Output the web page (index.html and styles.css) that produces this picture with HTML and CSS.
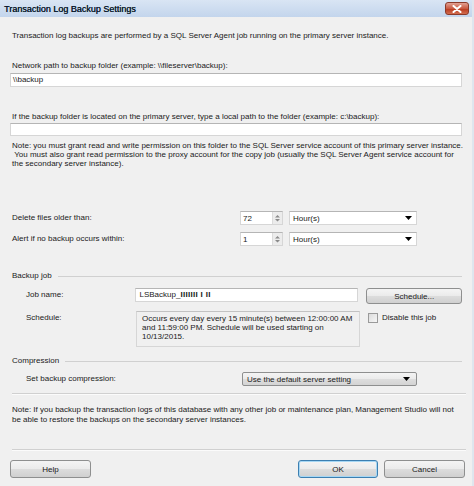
FILE: index.html
```html
<!DOCTYPE html>
<html>
<head>
<meta charset="utf-8">
<link rel="stylesheet" href="styles.css">
</head>
<body>
<div class="window">
  <div class="titlebar">
    <span class="title">Transaction Log Backup Settings</span>
    <span class="close"><svg width="10" height="8" viewBox="0 0 10 8"><path d="M1.5 1 L8.5 7 M8.5 1 L1.5 7" stroke="#fff" stroke-width="2" stroke-linecap="round"/></svg></span>
  </div>
  <div class="content">
    <p class="txt intro">Transaction log backups are performed by a SQL Server Agent job running on the primary server instance.</p>
    <p class="txt lbl1">Network path to backup folder (example: \\fileserver\backup):</p>
    <div class="input in1">\\backup</div>
    <p class="txt lbl2">If the backup folder is located on the primary server, type a local path to the folder (example: c:\backup):</p>
    <div class="input in2"></div>
    <p class="txt note">Note: you must grant read and write permission on this folder to the SQL Server service account of this primary server instance.<br>&nbsp;You must also grant read permission to the proxy account for the copy job (usually the SQL Server Agent service account for<br>the secondary server instance).</p>

    <div class="row row-del">
      <span class="txt rowlbl">Delete files older than:</span>
      <div class="spin"><span class="val">72</span><span class="spinbtn"><svg width="7" height="10" viewBox="0 0 7 10"><path d="M3.5 2 L6 4.5 H1 Z M3.5 8.5 L6 6 H1 Z" fill="#8a8a8a"/></svg></span></div>
      <div class="combo"><span>Hour(s)</span><svg class="arrow" width="7" height="4" viewBox="0 0 7 4"><path d="M0 0 H7 L3.5 4 Z" fill="#000"/></svg></div>
    </div>
    <div class="row row-alert">
      <span class="txt rowlbl">Alert if no backup occurs within:</span>
      <div class="spin"><span class="val">1</span><span class="spinbtn"><svg width="7" height="10" viewBox="0 0 7 10"><path d="M3.5 2 L6 4.5 H1 Z M3.5 8.5 L6 6 H1 Z" fill="#8a8a8a"/></svg></span></div>
      <div class="combo"><span>Hour(s)</span><svg class="arrow" width="7" height="4" viewBox="0 0 7 4"><path d="M0 0 H7 L3.5 4 Z" fill="#000"/></svg></div>
    </div>

    <div class="group g-backup"><span class="txt">Backup job</span><span class="gline"></span></div>
    <div class="row row-job">
      <span class="txt sublbl">Job name:</span>
      <div class="input jobin">LSBackup_<b class="bars">IIIIIII I II</b></div>
      <div class="btn schedbtn">Schedule...</div>
    </div>
    <div class="row row-sched">
      <span class="txt sublbl">Schedule:</span>
      <div class="schedbox">Occurs every day every 15 minute(s) between 12:00:00 AM and 11:59:00 PM. Schedule will be used starting on 10/13/2015.</div>
      <label class="chk"><span class="box"></span><span class="txt">Disable this job</span></label>
    </div>

    <div class="group g-comp"><span class="txt">Compression</span><span class="gline"></span></div>
    <div class="row row-comp">
      <span class="txt sublbl">Set backup compression:</span>
      <div class="dropbtn"><span>Use the default server setting</span><svg class="arrow" width="7" height="4" viewBox="0 0 7 4"><path d="M0 0 H7 L3.5 4 Z" fill="#000"/></svg></div>
    </div>
    <div class="sep sep1"></div>
    <p class="txt note2">Note: If you backup the transaction logs of this database with any other job or maintenance plan, Management Studio will not<br>be able to restore the backups on the secondary server instances.</p>
    <div class="sep sep2"></div>
    <div class="buttons">
      <div class="btn help">Help</div>
      <div class="spacer"></div>
      <div class="btn ok">OK</div>
      <div class="btn cancel">Cancel</div>
    </div>
  </div>
</div>
</body>
</html>
```

FILE: styles.css
```css
html, body {
  margin: 0;
  padding: 0;
}
body {
  width: 474px;
  height: 486px;
  overflow: hidden;
  background: #f0f0f0;
  font-family: "Liberation Sans", Arial, sans-serif;
  font-size: 8px;
  color: #1a1a1a;
}
.window {
  width: 474px;
  height: 486px;
  background: #f0f0f0;
  border-right: 2px solid #dfe6ee;
  box-sizing: border-box;
}
.titlebar {
  height: 17px;
  background: linear-gradient(#d9e5f4, #c3d5ec);
  display: flex;
  align-items: center;
  justify-content: space-between;
  padding: 0 3px 0 4px;
}
.title {
  font-size: 9px;
  color: #0b1a2c;
  text-shadow: 0.3px 0 0 #0b1a2c;
}
.close {
  width: 24px;
  height: 13px;
  border-radius: 3px;
  background: linear-gradient(#e2a193, #c95a42 50%, #b8381d 51%, #d26d4f);
  border: 1px solid #8b3a2a;
  box-sizing: border-box;
  display: flex;
  align-items: center;
  justify-content: center;
}
.content {
  padding: 0 10px;
  display: flex;
  flex-direction: column;
}
.txt {
  margin: 0;
  line-height: 10px;
  white-space: nowrap;
}
p.txt {
  padding-left: 2px;
}
.intro { margin-top: 14px; }
.lbl1 { margin-top: 20px; }
.input {
  height: 14px;
  box-sizing: border-box;
  background: #fff;
  border: 1px solid #d6d6d6;
  border-top-color: #b5b5b5;
  padding: 0 2px;
  line-height: 12px;
  white-space: nowrap;
}
.in1 { margin-top: 2px; }
.lbl2 { margin-top: 25px; }
.in2 { margin-top: 1px; height: 13px; }
.note {
  margin-top: 5px;
  line-height: 9px;
}
.row {
  display: flex;
  align-items: center;
}
.row-del { margin-top: 43px; height: 14px; }
.row-alert { margin-top: 7px; height: 14px; }
.rowlbl {
  padding-left: 2px;
  width: 228px;
}
.spin {
  width: 43px;
  height: 14px;
  box-sizing: border-box;
  background: #fff;
  border: 1px solid #d6d6d6;
  border-top-color: #b5b5b5;
  display: flex;
  align-items: center;
  justify-content: space-between;
  padding-left: 2px;
}
.spinbtn {
  width: 9px;
  height: 12px;
  background: #ececec;
  border-left: 1px solid #dcdcdc;
  display: flex;
  align-items: center;
  justify-content: center;
}
.combo {
  margin-left: 6px;
  width: 128px;
  height: 14px;
  box-sizing: border-box;
  background: #fff;
  border: 1px solid #d6d6d6;
  border-top-color: #b5b5b5;
  display: flex;
  align-items: center;
  justify-content: space-between;
  padding: 0 4px 0 3px;
}
.group {
  display: flex;
  align-items: center;
  padding-left: 2px;
  height: 10px;
}
.gline {
  flex: 1;
  height: 1px;
  background: #d0d0d0;
  margin-left: 6px;
}
.g-backup { margin-top: 25px; }
.sublbl {
  padding-left: 16px;
  width: 110px;
}
.row-job {
  margin-top: 7px;
  height: 16px;
  align-items: flex-start;
}
.row-job .sublbl { line-height: 14px; }
.jobin {
  width: 224px;
  padding-left: 3px;
}
.bars {
  font-weight: bold;
  letter-spacing: 0.3px;
}
.btn {
  box-sizing: border-box;
  border: 1px solid #8e8f8f;
  border-radius: 3px;
  background: linear-gradient(#f4f4f4, #ebebeb 48%, #dcdcdc 52%, #d0d0d0);
  display: flex;
  align-items: center;
  justify-content: center;
  height: 16px;
}
.schedbtn {
  margin-left: 8px;
  width: 96px;
}
.row-sched {
  margin-top: 7px;
  height: 36px;
  align-items: flex-start;
}
.row-sched .sublbl { margin-top: 2px; }
.schedbox {
  width: 224px;
  height: 36px;
  box-sizing: border-box;
  border: 1px solid #d6d6d6;
  border-top-color: #c2c2c2;
  background: #f0f0f0;
  padding: 2px 4px 0 5px;
  line-height: 9px;
}
.chk {
  margin-left: 8px;
  margin-top: 2px;
  display: flex;
  align-items: center;
}
.box {
  width: 10px;
  height: 10px;
  box-sizing: border-box;
  border: 1px solid #9a9a9a;
  background: linear-gradient(135deg, #dcdcdc, #f6f6f6);
  margin-right: 4px;
}
.g-comp { margin-top: 9px; }
.row-comp {
  margin-top: 6px;
  height: 14px;
}
.row-comp .sublbl { width: 216px; }
.dropbtn {
  width: 175px;
  height: 14px;
  box-sizing: border-box;
  border: 1px solid #8e8f8f;
  border-radius: 2px;
  background: linear-gradient(#f4f4f4, #ebebeb 48%, #dddddd 52%, #d4d4d4);
  display: flex;
  align-items: center;
  justify-content: space-between;
  padding: 0 6px 0 4px;
}
.sep {
  height: 1px;
  background: #d0d0d0;
  border-bottom: 1px solid #fbfbfb;
  margin-left: 2px;
  margin-right: -4px;
}
.sep1 { margin-top: 7px; }
.note2 {
  margin-top: 10px;
}
.sep2 { margin-top: 24px; }
.buttons {
  display: flex;
  margin-top: 9px;
  height: 18px;
}
.buttons .btn { height: 18px; width: 81px; }
.spacer { flex: 1; }
.ok {
  border-color: #3c7fb1 !important;
  box-shadow: inset 0 0 0 1px #a6d7f4;
  margin-right: 6px;
  width: 80px !important;
}
.cancel { margin-right: -3px; }
```
